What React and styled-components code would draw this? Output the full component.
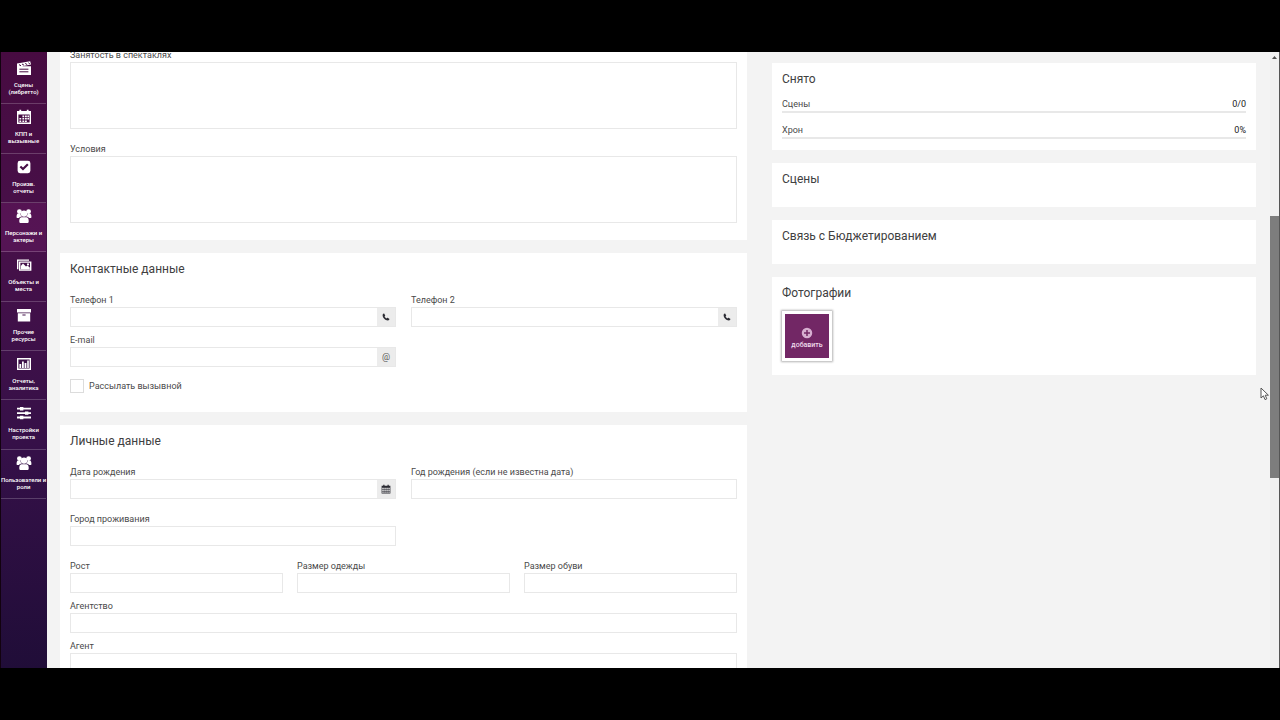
import React from "react";
import styled, { createGlobalStyle } from "styled-components";

const GlobalStyle = createGlobalStyle`
  *, *::before, *::after { box-sizing: border-box; }
  body { margin: 0; background: #000; }
  body, button, input, textarea { font-family: Roboto, "Liberation Sans", sans-serif; }
`;

const Screen = styled.div`
  display: flex;
  flex-direction: column;
  height: 100vh;
  padding: 52px 0;
  background: #000;
`;

const Shell = styled.div`
  position: relative;
  flex: 1;
  min-height: 0;
  display: grid;
  grid-template-columns: 47px minmax(0, 1fr) 10px;
  grid-template-rows: minmax(0, 1fr);
  overflow: hidden;
  background: #f3f3f3;
  color: #3c3c3c;
`;

const Sidebar = styled.aside`
  padding: 3px 1px 0 0;
  border-left: 1px solid #12020f;
  background: linear-gradient(#470b41 0%, #471049 30%, #351048 65%, #200d38 100%);
`;

const NavList = styled.ul`
  display: grid;
  grid-auto-rows: 1fr;
  height: 444px;
  margin: 0;
  padding: 0;
  list-style: none;
`;

const NavItem = styled.li`
  border-bottom: 1px solid rgba(255, 255, 255, 0.2);
  background: ${(p) => (p.$active ? "rgba(120, 30, 110, 0.3)" : "transparent")};
`;

const NavLink = styled.a`
  display: flex;
  flex-direction: column;
  align-items: center;
  gap: 5px;
  padding-top: 5px;
  color: #fff;
  font-size: 6px;
  font-weight: 500;
  line-height: 7px;
  text-align: center;
  text-decoration: none;
  white-space: nowrap;
`;

const NavIcon = styled.svg`
  display: block;
  width: 16px;
  height: 16px;
  fill: #fff;
`;

const Content = styled.main`
  display: grid;
  grid-template-columns: 687fr 484fr;
  gap: 25px;
  align-items: start;
  min-width: 0;
  padding: 0 14px 0 13px;
`;

const Column = styled.div`
  display: grid;
  gap: 13px;
  min-width: 0;
  margin-top: ${(p) => p.$top}px;
`;

const Card = styled.section`
  padding: 8px 10px ${(p) => p.$bottom}px;
  background: #fff;
`;

const CardTitle = styled.h2`
  margin: 0 0 ${(p) => p.$space || 0}px;
  color: #404040;
  font-size: 12px;
  font-weight: 400;
  line-height: 16px;
`;

const FieldRow = styled.div`
  display: grid;
  grid-template-columns: repeat(${(p) => p.$cols || 1}, minmax(0, 1fr));
  gap: ${(p) => (p.$cols === 3 ? 14 : 15)}px;
  margin-top: ${(p) => p.$space || 0}px;
`;

const FieldBox = styled.div`
  display: flex;
  flex-direction: column;
`;

const Label = styled.label`
  color: #4a4a4a;
  font-size: 9px;
  line-height: 14px;
`;

const InputGroup = styled.div`
  display: flex;
  height: 20px;
  border: 1px solid #e8e8e8;
`;

const TextInput = styled.input`
  flex: 1;
  min-width: 0;
  padding: 0 6px;
  border: 0;
  background: #fff;
  font-size: 9px;
`;

const Addon = styled.span`
  display: flex;
  align-items: center;
  justify-content: center;
  width: 18px;
  background: #ececec;
  color: #555;
  font-size: 9px;
  line-height: 18px;
`;

const AddonIcon = styled.svg`
  display: block;
  width: ${(p) => p.$size}px;
  height: ${(p) => p.$size}px;
  fill: #2b2b33;
`;

const TextArea = styled.textarea`
  display: block;
  width: 100%;
  height: 67px;
  padding: 6px;
  border: 1px solid #e8e8e8;
  background: #fff;
  font-size: 9px;
  resize: none;
`;

const CheckRow = styled.label`
  display: flex;
  align-items: center;
  gap: 5px;
  margin-top: 12px;
  color: #4a4a4a;
  font-size: 9px;
  line-height: 14px;
`;

const CheckBox = styled.input`
  appearance: none;
  width: 14px;
  height: 14px;
  margin: 0;
  border: 1px solid #dcdcdc;
  background: #fff;
`;

const Stats = styled.div`
  display: grid;
  gap: 10px;
`;

const StatHead = styled.div`
  display: flex;
  justify-content: space-between;
  color: #4a4a4a;
  font-size: 9px;
  line-height: 14px;
`;

const StatValue = styled.span`
  color: #222;
`;

const StatBar = styled.progress`
  display: block;
  appearance: none;
  width: 100%;
  height: 2px;
  border: 0;
  background: #e8e8e8;
  &::-webkit-progress-bar { background: #e8e8e8; }
  &::-webkit-progress-value { background: #722765; }
`;

const AddPhoto = styled.button`
  display: flex;
  flex-direction: column;
  align-items: center;
  justify-content: center;
  gap: 1px;
  width: 50px;
  height: 50px;
  padding: 4px 0 0;
  border: 3px solid #fff;
  background: #722765;
  background-clip: padding-box;
  box-shadow: 0 0 2px 1px rgba(0, 0, 0, 0.3);
  color: #efdcec;
  font-size: 7px;
  font-weight: 500;
  line-height: 10px;
`;

const PlusIcon = styled.svg`
  display: block;
  width: 12px;
  height: 12px;
  fill: #d6aed0;
`;

const ScrollTrack = styled.div`
  display: grid;
  grid-template-rows: 164fr 262fr 190fr;
  border-right: 1px solid #555;
  background: #f1f1f1;
`;

const ScrollArrow = styled.svg`
  display: block;
  width: 9px;
  height: 10px;
  fill: #505050;
`;

const ScrollThumb = styled.div`
  background: #7d7d7d;
`;

const Pointer = styled.svg`
  position: absolute;
  top: 335px;
  right: 11px;
  width: 9px;
  height: 14px;
  fill: #fff;
  stroke: #555;
`;

const icons = {
  clapper: (
    <>
      <path d="M1 3.4 14.2 1.2 15 4.6 6 6.2H15V15H1z" />
      <path d="M3 4.6 5 5.8M6 4l2 1.2M9.2 3.4l2 1.2M12.4 2.8l1.4 1M3.4 9.2h9M3.4 11.8h9" stroke="#470b41" strokeWidth="1" fill="none" />
    </>
  ),
  calendar: (
    <>
      <path d="M1 2h2.4V.8h1.8V2h5.6V.8h1.8V2H15v13H1zM2.4 5.6v8h11.2v-8z" fillRule="evenodd" />
      <path d="M6.4 6.6h1.8v1.6H6.4zM9 6.6h1.8v1.6H9zM11.4 6.6H13v1.6h-1.6zM3.4 9h1.8v1.6H3.4zM6.4 9h1.8v1.6H6.4zM9 9h1.8v1.6H9zM11.4 9H13v1.6h-1.6zM3.4 11.4h1.8V13H3.4zM6.4 11.4h1.8V13H6.4zM9 11.4h1.8V13H9z" />
    </>
  ),
  check: (
    <path
      d="M4 1.8h8a2.4 2.4 0 0 1 2.4 2.4v7.6a2.4 2.4 0 0 1-2.4 2.4H4a2.4 2.4 0 0 1-2.4-2.4V4.2A2.4 2.4 0 0 1 4 1.8zM7 11.6l5.6-5.5-1.5-1.5L7 8.6 5.1 6.7 3.6 8.2z"
      fillRule="evenodd"
    />
  ),
  users: (
    <>
      <circle cx="3.4" cy="3.6" r="2.4" />
      <circle cx="12.6" cy="3.6" r="2.4" />
      <circle cx="8" cy="5.6" r="3.2" />
      <path d="M.6 9.6C.4 7.2 1 5.8 2.2 5.6h2.2c.2 1.6.6 2.4 1.5 3.1-1.4 0-2.5.5-3 1.3H1.2c-.4 0-.6-.1-.6-.4zM15.4 9.6c.2-2.4-.4-3.8-1.6-4h-2.2c-.2 1.6-.6 2.4-1.5 3.1 1.4 0 2.5.5 3 1.3h1.7c.4 0 .6-.1.6-.4zM5.4 9.2h5.2c1.8.2 2.2 2.4 2.1 4.2 0 1-.7 1.6-1.6 1.6H4.9c-.9 0-1.6-.6-1.6-1.6-.1-1.8.3-4 2.1-4.2z" />
    </>
  ),
  images: (
    <>
      <path d="M1 2.4h12v1.4H2.4v8.4H1z" />
      <path d="M3 4.4h12.4v9.4H3zM4.4 5.8v6.6h9.6V5.8z" fillRule="evenodd" />
      <circle cx="12" cy="7.4" r="1.1" />
      <path d="M4.8 12.4V9l2.2-2.4 3 3 1.4-1.2 2.4 2v2z" />
    </>
  ),
  archive: (
    <path d="M1 2h14v3.4H1zM1.8 6.2h12.4v8.4H1.8zM6.4 7.4v1.2h3.2V7.4z" fillRule="evenodd" />
  ),
  chart: (
    <>
      <path d="M1 2h14v12H1zM2.4 3.4v9.2h11.2V3.4z" fillRule="evenodd" />
      <path d="M3.4 8h1.8v4H3.4zM6 5.4h1.8V12H6zM8.6 7h1.8v5H8.6zM11.2 4.4h1.6V12h-1.6z" />
    </>
  ),
  sliders: (
    <path d="M1 2.8h3V2h3.4v.8H15v1.8H7.4v.8H4v-.8H1zM1 7.2h8v-.8h3.4v.8H15V9h-2.6v.8H9V9H1zM1 11.6h3v-.8h3.4v.8H15v1.8H7.4v.8H4v-.8H1z" />
  ),
};

const menu = [
  { icon: "clapper", lines: ["Сцены", "(либретто)"] },
  { icon: "calendar", lines: ["КПП и", "вызывные"] },
  { icon: "check", lines: ["Произв.", "отчеты"] },
  { icon: "users", lines: ["Персонажи и", "актеры"], active: true },
  { icon: "images", lines: ["Объекты и", "места"] },
  { icon: "archive", lines: ["Прочие", "ресурсы"] },
  { icon: "chart", lines: ["Отчеты,", "аналитика"] },
  { icon: "sliders", lines: ["Настройки", "проекта"] },
  { icon: "users", lines: ["Пользователи и", "роли"] },
];

const PhoneGlyph = () => (
  <AddonIcon $size={8} viewBox="0 0 16 16" aria-hidden="true">
    <path d="M4.6 1.6 6.4 5c.2.4.1.8-.2 1.1L5 7.2c.8 1.7 2.1 3 3.8 3.8L9.9 9.8c.3-.3.7-.4 1.1-.2l3.4 1.8c.4.2.5.6.4 1-.5 1.6-1.6 2.4-3.2 2.4C6.4 14.6 1.4 9.6 1.2 4.4c0-1.6.8-2.7 2.4-3.2.4-.1.8 0 1 .4z" />
  </AddonIcon>
);

const CalendarGlyph = () => (
  <AddonIcon $size={10} viewBox="0 0 16 16" aria-hidden="true">
    <path
      d="M1 2.6h2.6V1h2v1.6h4.8V1h2v1.6H15V15H1zM2 6v2.2h2.4V6zM5.4 6v2.2h2.2V6zM8.6 6v2.2h2.2V6zM11.8 6v2.2H14V6zM2 9v2.2h2.4V9zM5.4 9v2.2h2.2V9zM8.6 9v2.2h2.2V9zM11.8 9v2.2H14V9zM2 12v2h2.4v-2zM5.4 12v2h2.2v-2zM8.6 12v2h2.2v-2zM11.8 12v2H14v-2z"
      fillRule="evenodd"
    />
  </AddonIcon>
);

function Field({ id, label, type = "text", addon }) {
  return (
    <FieldBox>
      <Label htmlFor={id}>{label}</Label>
      <InputGroup>
        <TextInput id={id} type={type} />
        {addon && <Addon>{addon}</Addon>}
      </InputGroup>
    </FieldBox>
  );
}

function AreaField({ id, label }) {
  return (
    <FieldBox>
      <Label htmlFor={id}>{label}</Label>
      <TextArea id={id} />
    </FieldBox>
  );
}

function Stat({ label, value }) {
  return (
    <div>
      <StatHead>
        <span>{label}</span>
        <StatValue>{value}</StatValue>
      </StatHead>
      <StatBar value={0} max={100} aria-label={label} />
    </div>
  );
}

export default function App() {
  return (
    <Screen>
      <GlobalStyle />
      <Shell>
        <Sidebar>
          <nav>
            <NavList>
              {menu.map((item) => (
                <NavItem key={item.lines[0]} $active={item.active}>
                  <NavLink href="#">
                    <NavIcon viewBox="0 0 16 16" aria-hidden="true">
                      {icons[item.icon]}
                    </NavIcon>
                    <span>
                      {item.lines[0]}
                      <br />
                      {item.lines[1]}
                    </span>
                  </NavLink>
                </NavItem>
              ))}
            </NavList>
          </nav>
        </Sidebar>

        <Content>
          <Column $top={-12}>
            <Card $bottom={17}>
              <AreaField id="employment" label="Занятость в спектаклях" />
              <FieldRow $space={13}>
                <AreaField id="terms" label="Условия" />
              </FieldRow>
            </Card>

            <Card $bottom={19}>
              <CardTitle $space={16}>Контактные данные</CardTitle>
              <FieldRow $cols={2}>
                <Field id="phone1" type="tel" label="Телефон 1" addon={<PhoneGlyph />} />
                <Field id="phone2" type="tel" label="Телефон 2" addon={<PhoneGlyph />} />
              </FieldRow>
              <FieldRow $cols={2} $space={6}>
                <Field id="email" type="email" label="E-mail" addon="@" />
              </FieldRow>
              <CheckRow>
                <CheckBox type="checkbox" />
                Рассылать вызывной
              </CheckRow>
            </Card>

            <Card $bottom={17}>
              <CardTitle $space={16}>Личные данные</CardTitle>
              <FieldRow $cols={2}>
                <Field id="birthdate" label="Дата рождения" addon={<CalendarGlyph />} />
                <Field id="birthyear" label="Год рождения (если не известна дата)" />
              </FieldRow>
              <FieldRow $cols={2} $space={13}>
                <Field id="city" label="Город проживания" />
              </FieldRow>
              <FieldRow $cols={3} $space={13}>
                <Field id="height" label="Рост" />
                <Field id="clothes" label="Размер одежды" />
                <Field id="shoes" label="Размер обуви" />
              </FieldRow>
              <FieldRow $space={6}>
                <Field id="agency" label="Агентство" />
              </FieldRow>
              <FieldRow $space={6}>
                <Field id="agent" label="Агент" />
              </FieldRow>
            </Card>
          </Column>

          <Column $top={11}>
            <Card $bottom={11}>
              <CardTitle $space={10}>Снято</CardTitle>
              <Stats>
                <Stat label="Сцены" value="0/0" />
                <Stat label="Хрон" value="0%" />
              </Stats>
            </Card>
            <Card $bottom={20}>
              <CardTitle>Сцены</CardTitle>
            </Card>
            <Card $bottom={20}>
              <CardTitle>Связь с Бюджетированием</CardTitle>
            </Card>
            <Card $bottom={14}>
              <CardTitle $space={10}>Фотографии</CardTitle>
              <AddPhoto type="button">
                <PlusIcon viewBox="0 0 16 16" aria-hidden="true">
                  <path d="M8 1a7 7 0 1 0 0 14A7 7 0 0 0 8 1zM7 4h2v3h3v2H9v3H7V9H4V7h3z" fillRule="evenodd" />
                </PlusIcon>
                добавить
              </AddPhoto>
            </Card>
          </Column>
        </Content>

        <ScrollTrack aria-hidden="true">
          <ScrollArrow viewBox="0 0 9 10">
            <path d="M2 7 4.5 4 7 7z" />
          </ScrollArrow>
          <ScrollThumb />
        </ScrollTrack>

        <Pointer viewBox="0 0 9 14" aria-hidden="true">
          <path d="M1 1v10l2.4-2.2L5 12.6l1.8-.8-1.6-3.6H8.4z" />
        </Pointer>
      </Shell>
    </Screen>
  );
}
